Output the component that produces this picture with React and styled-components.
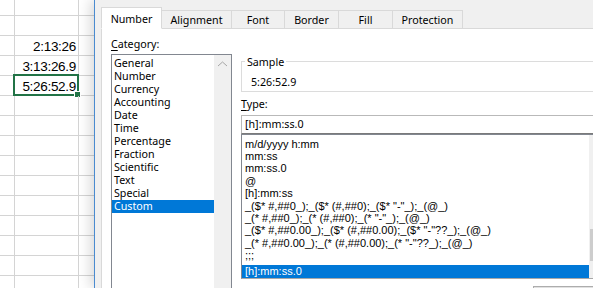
import { createGlobalStyle, styled, css } from 'styled-components';

const GlobalStyle = createGlobalStyle`
  html, body {
    margin: 0;
    padding: 0;
    background: #fff;
    overflow: hidden;
  }
`;

const Screen = styled.div`
  display: flex;
  width: 593px;
  height: 288px;
  overflow: hidden;
`;

/* ---------- spreadsheet behind the dialog ---------- */

const Sheet = styled.div`
  width: 94px;
  flex: none;
  display: flex;
  flex-direction: column;
  background: #fff;
  font-family: "Liberation Sans", Arial, sans-serif;
  font-size: 13.5px;
  letter-spacing: -0.3px;
  color: #000;
`;

const SheetRow = styled.div`
  display: flex;
  flex: none;
  box-sizing: border-box;
  height: ${(p) => p.$h || 20}px;
  border-bottom: 1px solid #d4d4d4;
`;

const SheetCell = styled.div`
  box-sizing: border-box;
  flex: ${(p) => (p.$w ? 'none' : '1')};
  width: ${(p) => (p.$w ? `${p.$w}px` : 'auto')};
  border-right: ${(p) => (p.$w ? '1px solid #d4d4d4' : 'none')};
  display: flex;
  align-items: flex-end;
  justify-content: flex-end;
  padding-right: 2px;
  line-height: 17px;
  position: relative;

  ${(p) =>
    p.$selected &&
    css`
      &::before {
        content: '';
        position: absolute;
        top: -2px;
        left: -2px;
        right: -1px;
        bottom: -1px;
        border: 2px solid #217346;
      }
      &::after {
        content: '';
        position: absolute;
        right: -3px;
        bottom: -3px;
        width: 7px;
        height: 7px;
        box-sizing: border-box;
        background: #217346;
        border: 1px solid #fff;
      }
    `}
`;

/* ---------- Format Cells dialog ---------- */

const Dialog = styled.div`
  flex: 1;
  min-width: 0;
  position: relative;
  background: #f0f0f0;
  border-left: 1px solid #4a8bd0;
  box-shadow: -4px 0 12px rgba(0, 0, 0, 0.15);
  padding: 7px 0 0 6px;
  overflow: hidden;
  font-family: "Noto Sans", "Segoe UI", sans-serif;
  font-size: 10.7px;
  color: #000;
`;

const TabBar = styled.div`
  display: flex;
  align-items: flex-end;
  height: 22px;
  margin-bottom: -1px;
  position: relative;
  z-index: 1;
`;

const Tab = styled.div`
  box-sizing: border-box;
  flex: none;
  width: ${(p) => p.$w}px;
  height: ${(p) => (p.$active ? 22 : 19)}px;
  display: flex;
  align-items: center;
  justify-content: center;
  background: ${(p) => (p.$active ? '#fff' : '#f0f0f0')};
  border: 1px solid #d9d9d9;
  border-left-width: ${(p) => (p.$active ? 1 : 0)}px;
  border-bottom-color: ${(p) => (p.$active ? '#fff' : '#d9d9d9')};
  padding-top: ${(p) => (p.$active ? 2 : 0)}px;
`;

const Panel = styled.div`
  box-sizing: border-box;
  width: 520px;
  height: 280px;
  background: #fff;
  border-top: 1px solid #d9d9d9;
  border-left: 1px solid #d9d9d9;
  padding: 8px 0 0 9px;
  display: flex;
  gap: 9px;
`;

const LeftColumn = styled.div`
  width: 121px;
  flex: none;
  display: flex;
  flex-direction: column;
`;

const RightColumn = styled.div`
  width: 366px;
  flex: none;
  display: flex;
  flex-direction: column;
  padding-top: 17.7px;
`;

const Label = styled.div`
  line-height: 15px;
  margin-top: ${(p) => p.$mt || 0}px;
`;

const U = styled.span`
  text-decoration: underline;
  text-underline-offset: 2px;
`;

const CategoryBox = styled.div`
  box-sizing: border-box;
  margin-top: 2px;
  height: 240px;
  border: 1px solid #828790;
  display: flex;
`;

const CategoryItems = styled.div`
  flex: 1;
  padding-top: 1.5px;
`;

const CategoryItem = styled.div`
  line-height: 13px;
  padding-left: 2px;
  white-space: nowrap;
  background: ${(p) => (p.$selected ? '#0078d7' : 'transparent')};
  color: ${(p) => (p.$selected ? '#fff' : '#000')};
`;

const ScrollTrack = styled.div`
  width: 17px;
  flex: none;
  background: #f0f0f0;
  display: flex;
  flex-direction: column;
  padding-top: ${(p) => p.$thumbTop || 0}px;
`;

const ScrollThumb = styled.div`
  height: ${(p) => p.$h}px;
  margin: 0 1px;
  background: #cdcdcd;
`;

const Group = styled.fieldset`
  margin: 0;
  min-width: 0;
  padding: 6px 0 2px 3px;
  border: 1px solid #dcdcdc;
`;

const Legend = styled.legend`
  padding: 0 2px;
  line-height: 14px;
`;

const SampleValue = styled.div`
  padding-left: 6px;
  line-height: 14px;
`;

const TypeInput = styled.div`
  box-sizing: border-box;
  margin-top: 3px;
  height: 19px;
  border: 1px solid #b9b9b9;
  border-bottom-color: #7a7a7a;
  padding-left: 3px;
  line-height: 17px;
  white-space: nowrap;
`;

const TypeList = styled.div`
  box-sizing: border-box;
  height: 147px;
  border: 1px solid #828790;
  border-bottom-color: #a8a8a8;
  display: flex;
  font-family: "Liberation Sans", Arial, sans-serif;
  font-size: 11px;
`;

const TypeItems = styled.div`
  flex: 1;
  min-width: 0;
  padding-top: 3px;
  overflow: hidden;
`;

const TypeItem = styled.div`
  height: ${(p) => (p.$selected ? 13.4 : 12.4)}px;
  line-height: ${(p) => (p.$selected ? 13.4 : 12.4)}px;
  margin-top: ${(p) => (p.$selected ? 3.2 : 0)}px;
  padding-left: 3px;
  white-space: pre;
  overflow: hidden;
  background: ${(p) => (p.$selected ? '#0078d7' : 'transparent')};
  color: ${(p) => (p.$selected ? '#fff' : '#000')};
`;

const ButtonRow = styled.div`
  display: flex;
  justify-content: flex-end;
  margin-top: 7px;
`;

/* only the top edge of this button shows in the frame */
const Button = styled.div`
  box-sizing: border-box;
  width: 74px;
  height: 23px;
  border: 1px solid #adadad;
  background: #e1e1e1;
`;

const tabs = [
  { label: 'Number', w: 61, active: true },
  { label: 'Alignment', w: 70 },
  { label: 'Font', w: 53 },
  { label: 'Border', w: 54 },
  { label: 'Fill', w: 54 },
  { label: 'Protection', w: 70 },
];

const categories = [
  'General',
  'Number',
  'Currency',
  'Accounting',
  'Date',
  'Time',
  'Percentage',
  'Fraction',
  'Scientific',
  'Text',
  'Special',
  'Custom',
];

const formats = [
  'm/d/yyyy h:mm',
  'mm:ss',
  'mm:ss.0',
  '@',
  '[h]:mm:ss',
  '_($* #,##0_);_($* (#,##0);_($* "-"_);_(@_)',
  '_(* #,##0_);_(* (#,##0);_(* "-"_);_(@_)',
  '_($* #,##0.00_);_($* (#,##0.00);_($* "-"??_);_(@_)',
  '_(* #,##0.00_);_(* (#,##0.00);_(* "-"??_);_(@_)',
  ';;;',
];

const sheetValues = { 2: '2:13:26', 3: '3:13:26.9', 4: '5:26:52.9' };

const UpArrow = () => (
  <svg width="17" height="17" viewBox="0 0 17 17">
    <polyline points="4,11 8.5,7 13,11" fill="none" stroke="#a6a6a6" strokeWidth="1" />
  </svg>
);

export default function App() {
  const rows = Array.from({ length: 15 }, (_, i) => i);
  return (
    <>
      <GlobalStyle />
      <Screen>
        <Sheet>
          {rows.map((r) => (
            <SheetRow key={r} $h={r === 0 ? 16 : 20}>
              <SheetCell $w={15} />
              <SheetCell $w={64} $selected={r === 4}>
                {sheetValues[r] || ''}
              </SheetCell>
              <SheetCell />
            </SheetRow>
          ))}
        </Sheet>

        <Dialog>
          <TabBar>
            {tabs.map((t) => (
              <Tab key={t.label} $w={t.w} $active={t.active}>
                {t.label}
              </Tab>
            ))}
          </TabBar>

          <Panel>
            <LeftColumn>
              <Label>
                <U>C</U>ategory:
              </Label>
              <CategoryBox>
                <CategoryItems>
                  {categories.map((c) => (
                    <CategoryItem key={c} $selected={c === 'Custom'}>
                      {c}
                    </CategoryItem>
                  ))}
                </CategoryItems>
                <ScrollTrack>
                  <UpArrow />
                </ScrollTrack>
              </CategoryBox>
            </LeftColumn>

            <RightColumn>
              <Group>
                <Legend>Sample</Legend>
                <SampleValue>5:26:52.9</SampleValue>
              </Group>

              <Label $mt={5}>
                <U>T</U>ype:
              </Label>
              <TypeInput>[h]:mm:ss.0</TypeInput>
              <TypeList>
                <TypeItems>
                  {formats.map((f) => (
                    <TypeItem key={f}>{f}</TypeItem>
                  ))}
                  <TypeItem $selected>[h]:mm:ss.0</TypeItem>
                </TypeItems>
                <ScrollTrack $thumbTop={94}>
                  <ScrollThumb $h={32} />
                </ScrollTrack>
              </TypeList>
              <ButtonRow>
                <Button />
              </ButtonRow>
            </RightColumn>
          </Panel>
        </Dialog>
      </Screen>
    </>
  );
}
